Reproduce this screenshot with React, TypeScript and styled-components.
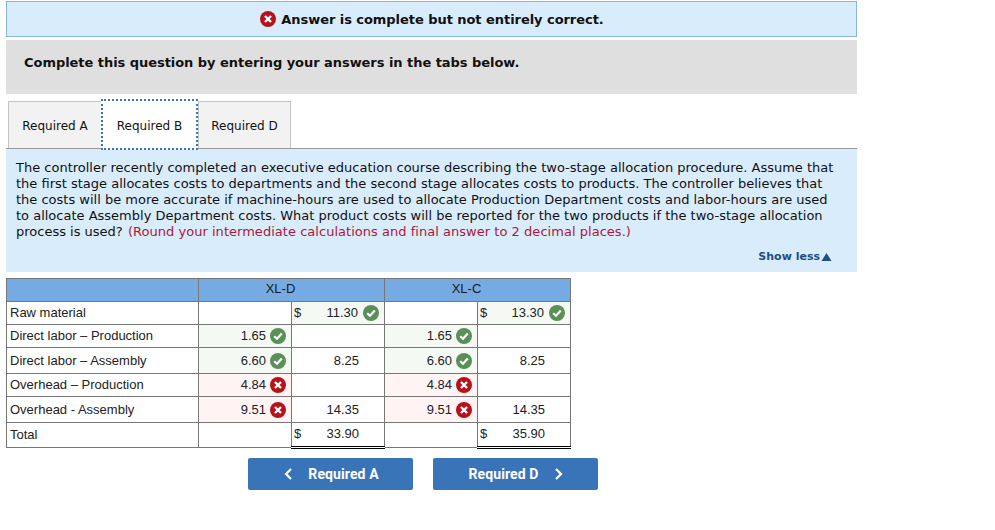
import React from "react";
import styled, { createGlobalStyle } from "styled-components";

const Global = createGlobalStyle`
  html, body { margin: 0; padding: 0; background: #fff; }
  body { font-family: "DejaVu Sans", Verdana, sans-serif; color: #000; }
`;

const Page = styled.div`
  width: 851px;
  margin-left: 6px;
  padding-top: 1px;
`;

const Banner = styled.div`
  box-sizing: border-box;
  height: 36px;
  background: #d9ecfb;
  border: 1px solid #8ab4dc;
  display: flex;
  align-items: center;
  justify-content: center;
  gap: 5px;
  font-size: 13px;
  font-weight: bold;
  letter-spacing: -0.05px;
  color: #111;
  padding-left: 1px;
`;

const Instruction = styled.div`
  box-sizing: border-box;
  height: 54px;
  margin-top: 3px;
  background: #dfdfdf;
  padding: 15px 18px 0;
  font-size: 13px;
  font-weight: bold;
  letter-spacing: -0.045px;
  line-height: 16px;
  color: #111;
`;

const TabBar = styled.div`
  display: flex;
  margin-top: 7px;
  padding-left: 2px;
  height: 48px;
  box-sizing: border-box;
  border-bottom: 1px solid #999;
`;

const Tab = styled.div<{ $active?: boolean; $w: number }>`
  box-sizing: border-box;
  height: ${p => (p.$active ? "51px" : "47px")};
  margin-top: ${p => (p.$active ? "-2px" : "0")};
  width: ${p => p.$w}px;
  margin-left: ${p => (p.$active ? "-1px" : "0")};
  padding-top: ${p => (p.$active ? "2px" : "1px")};
  position: relative;
  z-index: ${p => (p.$active ? 1 : 0)};
  display: flex;
  align-items: center;
  justify-content: center;
  font-size: 12px;
  color: #111;
  background: ${p => (p.$active ? "#fff" : "#f2f2f2")};
  border: ${p => (p.$active ? "2px dotted #3a74b8" : "1px solid #c4c4c4")};
  border-bottom: ${p => (p.$active ? "2px dotted #3a74b8" : "none")};
`;

const Panel = styled.div`
  box-sizing: border-box;
  height: 123px;
  background: #d9ecfb;
  padding: 11px 20px 0 10px;
  position: relative;
  font-size: 13px;
  line-height: 16px;
  color: #111;
`;

const Hint = styled.span`
  color: #b0163a;
  letter-spacing: 0.03px;
  margin-left: 1px;
`;

const ShowLess = styled.div`
  position: absolute;
  right: 25px;
  bottom: 8px;
  font-size: 11px;
  font-weight: bold;
  color: #1f4e86;
  line-height: 14px;
  display: flex;
  align-items: center;
`;

const Table = styled.table`
  border-collapse: collapse;
  table-layout: fixed;
  width: 565px;
  margin-top: 6px;
  font-family: "Liberation Sans", Arial, sans-serif;
  font-size: 13px;
  color: #222;
`;

const HeadCell = styled.th<{ $product?: boolean }>`
  background: #75aae3;
  border: 1px solid #777;
  font-weight: normal;
  height: 23px;
  padding: 0 ${p => (p.$product ? "22px" : "0")} 3px 0;
  box-sizing: border-box;
  text-align: center;
  color: #1a1a1a;
`;

const LabelCell = styled.td<{ $raise: number }>`
  border: 1px solid #777;
  padding: 0 0 ${p => p.$raise}px 3px;
  white-space: nowrap;
`;

const Cell = styled.td<{ $state?: "ok" | "bad"; $total?: boolean; $topBlack?: boolean }>`
  border: 1px solid #777;
  border-top-color: ${p => (p.$topBlack || p.$total ? "#000" : "#777")};
  border-bottom: ${p => (p.$total ? "3px double #000" : "1px solid #777")};
  padding: 0;
  background: ${p => (p.$state === "ok" ? "#f5f9f4" : p.$state === "bad" ? "#fff4f3" : "#fff")};
`;

const CellRow = styled.div`
  display: flex;
  align-items: center;
  justify-content: space-between;
  padding: 0 5px 0 2px;
`;

const Dollar = styled.span<{ $raise: number }>`
  padding-bottom: ${p => p.$raise}px;
`;

const Value = styled.span<{ $pad?: number; $raise: number }>`
  margin-left: auto;
  padding-right: ${p => p.$pad ?? 0}px;
  padding-bottom: ${p => p.$raise}px;
`;

const Row = styled.tr<{ $h: number }>`
  height: ${p => p.$h}px;
`;

const Buttons = styled.div`
  display: flex;
  gap: 20px;
  margin-top: 9px;
  margin-left: 242px;
`;

const NavButton = styled.div<{ $back?: boolean }>`
  box-sizing: border-box;
  width: 165px;
  height: 32px;
  padding-left: ${p => (p.$back ? "2px" : "0")};
  background: #3a74b8;
  border-radius: 2px;
  color: #fff;
  display: flex;
  align-items: center;
  justify-content: center;
  gap: 15px;
  font-family: "Roboto", Arial, sans-serif;
  font-weight: 700;
  font-size: 14px;
  letter-spacing: 0.1px;
`;

const Check = () => (
  <svg width="16" height="16" viewBox="0 0 16 16" style={{ flex: "none" }}>
    <circle cx="8" cy="8" r="8" fill="#5a8f58" />
    <path d="M4.2 8.3 L7 10.8 L11.8 5.6" fill="none" stroke="#fff" strokeWidth="2.2" />
  </svg>
);

const Cross = ({ size = 16 }: { size?: number }) => (
  <svg width={size} height={size} viewBox="0 0 16 16" style={{ flex: "none" }}>
    <circle cx="8" cy="8" r="8" fill="#b5121b" />
    <path d="M5 5 L11 11 M11 5 L5 11" fill="none" stroke="#fff" strokeWidth="2.4" />
  </svg>
);

const Chevron = ({ left }: { left?: boolean }) => (
  <svg width="9" height="12" viewBox="0 0 9 12">
    <path d={left ? "M7 1 L2 6 L7 11" : "M2 1 L7 6 L2 11"} fill="none" stroke="#fff" strokeWidth="2.2" />
  </svg>
);

const Triangle = () => (
  <svg width="11" height="8" viewBox="0 0 11 8" style={{ marginLeft: 1 }}>
    <path d="M5.5 0 L10.5 8 L0.5 8 Z" fill="#1f4e86" />
  </svg>
);

const Gap = styled.span`
  width: 4px;
  flex: none;
`;

type Mark = { v: string; ok: boolean } | null;
const rows: { label: string; h: number; raise: number; cost: Mark; d: string; dollar?: boolean; dmark?: boolean; c: string; total?: boolean; black?: boolean }[] = [
  { label: "Raw material", h: 23, raise: 2, cost: null, d: "11.30", c: "13.30", dollar: true, dmark: true },
  { label: "Direct labor – Production", h: 23, raise: 2, cost: { v: "1.65", ok: true }, d: "", c: "" },
  { label: "Direct labor – Assembly", h: 26, raise: 0, cost: { v: "6.60", ok: true }, d: "8.25", c: "8.25" },
  { label: "Overhead – Production", h: 23, raise: 2, cost: { v: "4.84", ok: false }, d: "", c: "", black: true },
  { label: "Overhead - Assembly", h: 26, raise: 0, cost: { v: "9.51", ok: false }, d: "14.35", c: "14.35" },
  { label: "Total", h: 25, raise: 2, cost: null, d: "33.90", c: "35.90", dollar: true, total: true },
];

const CostCell = ({ m, black, total, raise }: { m: Mark; black?: boolean; total?: boolean; raise: number }) => (
  <Cell $state={m ? (m.ok ? "ok" : "bad") : undefined} $topBlack={black || total}>
    {m && (
      <CellRow>
        <Value $raise={raise}>{m.v}</Value>
        <Gap />
        {m.ok ? <Check /> : <Cross />}
      </CellRow>
    )}
  </Cell>
);

const MoneyCell = ({ v, dollar, mark, total, raise }: { v: string; dollar?: boolean; mark?: boolean; total?: boolean; raise: number }) => (
  <Cell $state={mark ? "ok" : undefined} $total={total}>
    {v && (
      <CellRow>
        {dollar && <Dollar $raise={raise}>$</Dollar>}
        <Value $pad={mark ? 5 : 20} $raise={raise}>{v}</Value>
        {mark && <Check />}
      </CellRow>
    )}
  </Cell>
);

export default function App() {
  return (
    <Page>
      <Global />
      <Banner>
        <Cross />
        <span>Answer is complete but not entirely correct.</span>
      </Banner>
      <Instruction>Complete this question by entering your answers in the tabs below.</Instruction>
      <TabBar>
        <Tab $w={94}>Required A</Tab>
        <Tab $w={97} $active>Required B</Tab>
        <Tab $w={93}>Required D</Tab>
      </TabBar>
      <Panel>
        The controller recently completed an executive education course describing the two-stage allocation procedure. Assume that the first stage allocates costs to departments and the second stage allocates costs to products. The controller believes that the costs will be more accurate if machine-hours are used to allocate Production Department costs and labor-hours are used to allocate Assembly Department costs. What product costs will be reported for the two products if the two-stage allocation process is used? <Hint>(Round your intermediate calculations and final answer to 2 decimal places.)</Hint>
        <ShowLess>Show less<Triangle /></ShowLess>
      </Panel>
      <Table>
        <colgroup>
          <col style={{ width: 192 }} />
          <col style={{ width: 93 }} />
          <col style={{ width: 93 }} />
          <col style={{ width: 93 }} />
          <col style={{ width: 93 }} />
        </colgroup>
        <thead>
          <tr>
            <HeadCell />
            <HeadCell colSpan={2} $product>XL-D</HeadCell>
            <HeadCell colSpan={2} $product>XL-C</HeadCell>
          </tr>
        </thead>
        <tbody>
          {rows.map(r => (
            <Row key={r.label} $h={r.h}>
              <LabelCell $raise={r.raise}>{r.label}</LabelCell>
              <CostCell m={r.cost} black={r.black} total={r.total} raise={r.raise} />
              <MoneyCell v={r.d} dollar={r.dollar} mark={r.dmark} total={r.total} raise={r.raise} />
              <CostCell m={r.cost} black={r.black} total={r.total} raise={r.raise} />
              <MoneyCell v={r.c} dollar={r.dollar} mark={r.dmark} total={r.total} raise={r.raise} />
            </Row>
          ))}
        </tbody>
      </Table>
      <Buttons>
        <NavButton $back><Chevron left /> Required A</NavButton>
        <NavButton>Required D <Chevron /></NavButton>
      </Buttons>
    </Page>
  );
}
